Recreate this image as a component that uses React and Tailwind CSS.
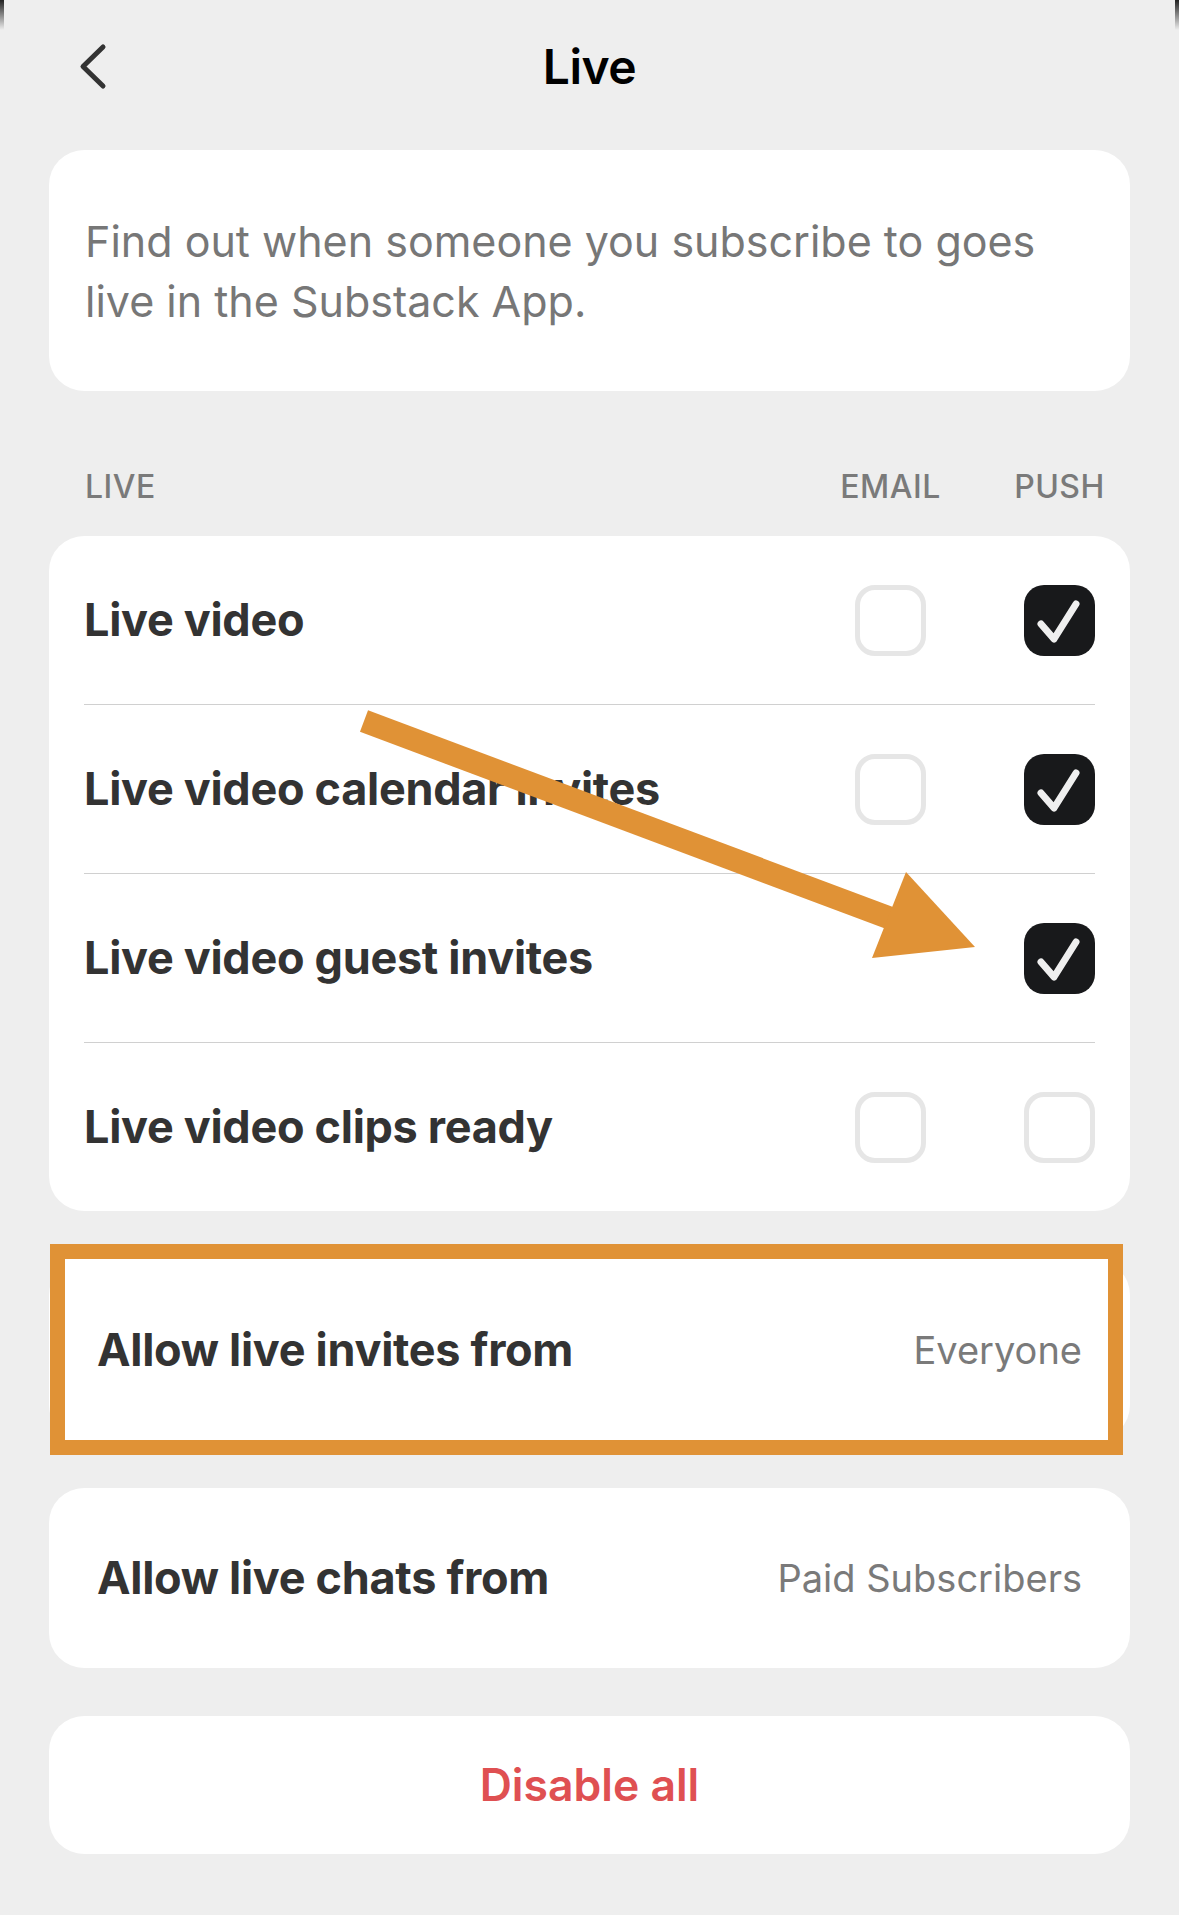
import React from 'react';

const rows = [
    { label: 'Live video', email: false, push: true },
    { label: 'Live video calendar invites', email: false, push: true },
    { label: 'Live video guest invites', email: null, push: true },
    { label: 'Live video clips ready', email: false, push: false },
];

const Checkbox = ({ checked }) => {
    if (checked === null) return <div className="w-[71px] h-[71px]" />;
    if (!checked) {
        return <div className="w-[71px] h-[71px] rounded-[20px] border-[5px] border-[#e6e6e6] bg-white" />;
    }
    return (
        <div className="w-[71px] h-[71px] rounded-[20px] bg-[#18191b] flex items-center justify-center">
            <svg width="71" height="71" viewBox="0 0 71 71" fill="none">
                <path d="M17 39 L30 54 L52 19" stroke="#efefef" strokeWidth="7" strokeLinecap="round" strokeLinejoin="round" />
            </svg>
        </div>
    );
};

const App = () => {
    return (
        <div className="relative w-full min-h-[1915px] bg-[#eeeeee] font-['Inter',sans-serif] overflow-hidden">
            {/* phone frame corners */}
            <div className="absolute top-0 left-0 w-[4px] h-[30px] bg-gradient-to-b from-[#222] to-transparent" />
            <div className="absolute top-0 right-0 w-[4px] h-[30px] bg-gradient-to-b from-[#222] to-transparent" />

            <div className="px-[49px]">
                {/* Header */}
                <div className="relative h-[134px] flex items-center justify-center">
                    <button className="absolute left-[30px] top-[43px]">
                        <svg width="30" height="48" viewBox="0 0 30 48" fill="none">
                            <path d="M24 4 L4 23.5 L24 43" stroke="#333" strokeWidth="5" strokeLinecap="round" strokeLinejoin="round" />
                        </svg>
                    </button>
                    <h1 className="text-[48px] font-semibold text-black tracking-[-0.5px]">Live</h1>
                </div>

                {/* Description */}
                <div className="mt-[16px] h-[241px] bg-white rounded-[35px] pl-[36px] pr-[60px] flex items-center">
                    <p className="text-[43px] leading-[60px] text-[#777777]">
                        Find out when someone you subscribe to goes live in the Substack App.
                    </p>
                </div>

                {/* Section header */}
                <div className="mt-[76px] mb-[29px] h-[40px] flex items-center justify-between pl-[36px] pr-[35px] text-[32px] text-[#7a7a7a] font-medium tracking-[0.5px]">
                    <span>LIVE</span>
                    <div className="flex gap-[98px]">
                        <span className="w-[71px] flex justify-center whitespace-nowrap">EMAIL</span>
                        <span className="w-[71px] flex justify-center whitespace-nowrap">PUSH</span>
                    </div>
                </div>

                {/* Toggles */}
                <div className="bg-white rounded-[35px] px-[35px]">
                    {rows.map((row, i) => (
                        <div key={row.label} className={i > 0 ? 'border-t border-[#d0d0d0]' : ''}>
                            <div className="h-[168px] flex items-center justify-between">
                                <span className="text-[45px] font-bold text-[#333333] tracking-[-0.3px]">{row.label}</span>
                                <div className="flex gap-[98px]">
                                    <Checkbox checked={row.email} />
                                    <Checkbox checked={row.push} />
                                </div>
                            </div>
                        </div>
                    ))}
                </div>

                {/* Allow live invites (highlighted) */}
                <div className="relative mt-[49px] h-[180px] bg-white rounded-[35px]">
                    <div className="absolute left-[1px] right-[7px] top-[-16px] bottom-[-15px] border-[15px] border-[#e09236] bg-white" />
                    <div className="relative h-full px-[48px] flex items-center justify-between">
                        <span className="text-[45px] font-bold text-[#333333] tracking-[-0.3px]">Allow live invites from</span>
                        <span className="text-[38px] text-[#7a7a7a]">Everyone</span>
                    </div>
                </div>

                {/* Allow live chats */}
                <div className="mt-[48px] h-[180px] bg-white rounded-[35px] px-[48px] flex items-center justify-between">
                    <span className="text-[45px] font-bold text-[#333333] tracking-[-0.3px]">Allow live chats from</span>
                    <span className="text-[38px] text-[#7a7a7a]">Paid Subscribers</span>
                </div>

                {/* Disable all */}
                <div className="mt-[48px] h-[138px] bg-white rounded-[35px] flex items-center justify-center">
                    <span className="text-[44.5px] font-semibold text-[#df5052]">Disable all</span>
                </div>
            </div>

            {/* annotation arrow */}
            <svg className="absolute top-0 left-0 pointer-events-none" width="1179" height="1915" viewBox="0 0 1179 1915">
                <line x1="364" y1="721" x2="895" y2="920" stroke="#e09236" strokeWidth="23" />
                <polygon points="906,872 975,947 872,958" fill="#e09236" />
            </svg>
        </div>
    );
};

export default App;
